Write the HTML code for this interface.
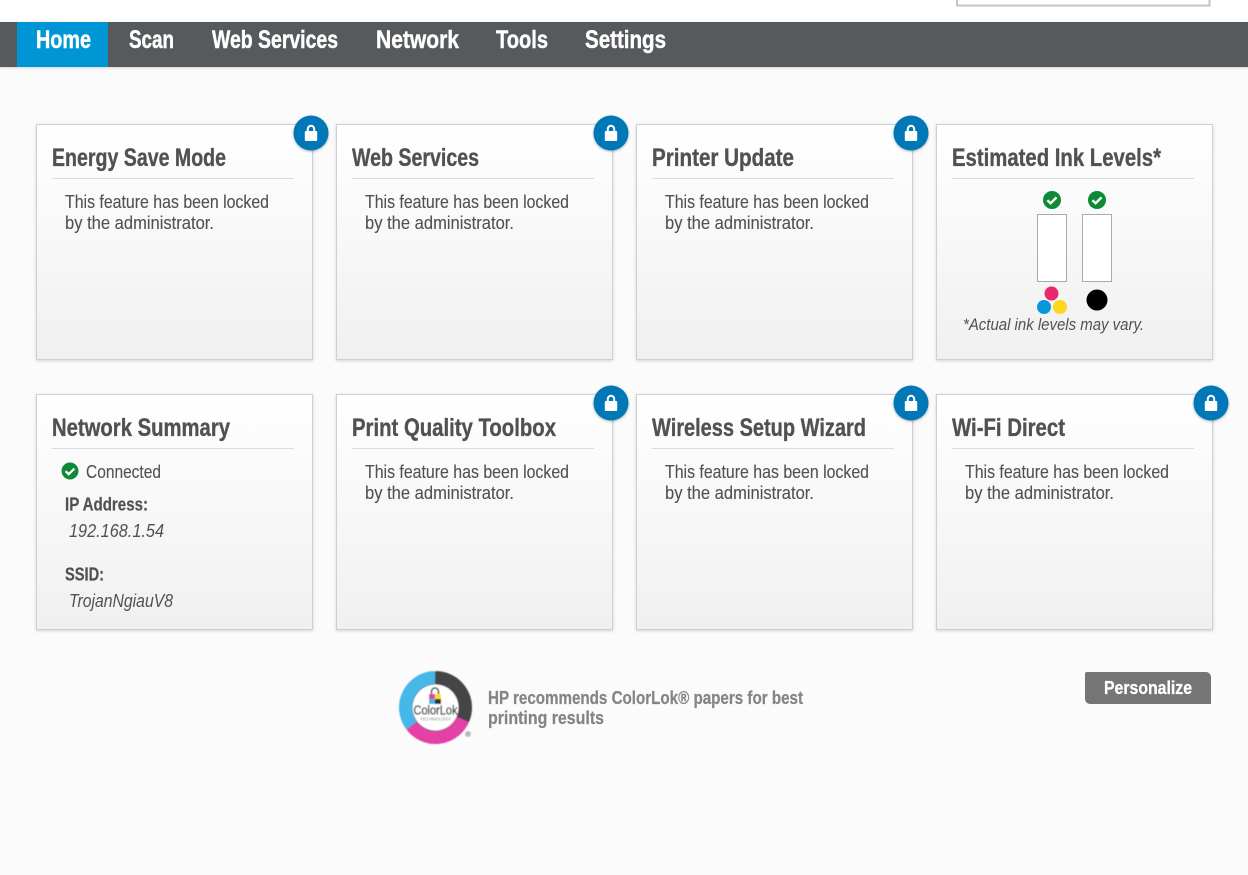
<!DOCTYPE html>
<html lang="en">
<head>
<meta charset="utf-8">
<title>Home</title>
<style>
html,body{margin:0;padding:0;background:#fbfbfb;width:1248px;height:875px;overflow:hidden}
svg{display:block;position:absolute;left:0;top:0}
text{font-family:"Liberation Sans",sans-serif}
.nav{font-size:25px;font-weight:700;fill:#fff;stroke:#fff;stroke-width:.45px}
.t{font-size:25px;font-weight:700;fill:#505252;stroke:#505252;stroke-width:.35px}
.b{font-size:18px;fill:#505252;stroke:#505252;stroke-width:.12px}
.l{font-size:18px;font-weight:700;fill:#505252;stroke:#505252;stroke-width:.2px}
.i{font-size:18px;font-style:italic;fill:#505252}
.g{font-size:18px;font-weight:700;fill:#858585;stroke:#858585;stroke-width:.25px}
</style>
</head>
<body>
<svg width="1248" height="875" viewBox="0 0 1248 875" xmlns="http://www.w3.org/2000/svg">
<defs>
<linearGradient id="cg" x1="0" y1="0" x2="0" y2="1"><stop offset="0" stop-color="#ffffff"/><stop offset="1" stop-color="#f0f0f0"/></linearGradient>
<filter id="sh" x="-5%" y="-5%" width="110%" height="110%"><feDropShadow dx="0" dy="1" stdDeviation="1.5" flood-color="#000" flood-opacity=".16"/></filter>
<filter id="ls" x="-30%" y="-30%" width="160%" height="160%"><feDropShadow dx="0" dy="1" stdDeviation="1.2" flood-color="#000" flood-opacity=".3"/></filter>
<filter id="blur"><feGaussianBlur stdDeviation=".5"/></filter>
<g id="card"><rect x=".5" y=".5" width="276" height="235" fill="url(#cg)" stroke="#cfcfcf" filter="url(#sh)"/><rect x="16" y="54" width="242" height="1" fill="#dcdcdc"/></g>
<g id="lock"><circle r="17.500" fill="#0078b8" filter="url(#ls)"/><path d="M-3.200-2V-4A3.200 3.200 0 0 1 3.200-4V-2" fill="none" stroke="#fff" stroke-width="2"/><rect x="-6.200" y="-2" width="12.400" height="10" rx="1" fill="#fff"/></g>
<g id="chk"><circle r="9" fill="#0e8a36"/><path d="M-4.600 .2L-1.400 3.200L4.600-2.600" fill="none" stroke="#fff" stroke-width="2.400"/></g>
</defs>

<rect width="1248" height="22" fill="#fff"/>
<path d="M957-2V5.500H1209.500V-2" fill="#fff" stroke="#c6c6c6" stroke-width="2"/>

<rect y="22" width="1248" height="45" fill="#575a5b" filter="url(#sh)"/>
<rect x="17" y="22" width="91" height="45" fill="#0096d6"/>
<text class="nav" x="36" y="48" textLength="55" lengthAdjust="spacingAndGlyphs">Home</text>
<text class="nav" x="129" y="48" textLength="45" lengthAdjust="spacingAndGlyphs">Scan</text>
<text class="nav" x="212" y="48" textLength="126" lengthAdjust="spacingAndGlyphs">Web Services</text>
<text class="nav" x="376" y="48" textLength="83" lengthAdjust="spacingAndGlyphs">Network</text>
<text class="nav" x="496" y="48" textLength="52" lengthAdjust="spacingAndGlyphs">Tools</text>
<text class="nav" x="585" y="48" textLength="81" lengthAdjust="spacingAndGlyphs">Settings</text>

<use href="#card" x="36" y="124"/>
<use href="#card" x="336" y="124"/>
<use href="#card" x="636" y="124"/>
<use href="#card" x="936" y="124"/>
<use href="#card" x="36" y="394"/>
<use href="#card" x="336" y="394"/>
<use href="#card" x="636" y="394"/>
<use href="#card" x="936" y="394"/>

<use href="#lock" x="311" y="133"/>
<use href="#lock" x="611" y="133"/>
<use href="#lock" x="911" y="133"/>
<use href="#lock" x="611" y="403"/>
<use href="#lock" x="911" y="403"/>
<use href="#lock" x="1211" y="403"/>

<text class="t" x="52" y="166" textLength="174" lengthAdjust="spacingAndGlyphs">Energy Save Mode</text>
<text class="t" x="352" y="166" textLength="127" lengthAdjust="spacingAndGlyphs">Web Services</text>
<text class="t" x="652" y="166" textLength="142" lengthAdjust="spacingAndGlyphs">Printer Update</text>
<text class="t" x="952" y="166" textLength="209" lengthAdjust="spacingAndGlyphs">Estimated Ink Levels*</text>
<text class="t" x="52" y="436" textLength="178" lengthAdjust="spacingAndGlyphs">Network Summary</text>
<text class="t" x="352" y="436" textLength="204" lengthAdjust="spacingAndGlyphs">Print Quality Toolbox</text>
<text class="t" x="652" y="436" textLength="214" lengthAdjust="spacingAndGlyphs">Wireless Setup Wizard</text>
<text class="t" x="952" y="436" textLength="113" lengthAdjust="spacingAndGlyphs">Wi-Fi Direct</text>

<text class="b" x="65" y="208" textLength="204" lengthAdjust="spacingAndGlyphs">This feature has been locked</text>
<text class="b" x="65" y="229" textLength="149" lengthAdjust="spacingAndGlyphs">by the administrator.</text>
<text class="b" x="365" y="208" textLength="204" lengthAdjust="spacingAndGlyphs">This feature has been locked</text>
<text class="b" x="365" y="229" textLength="149" lengthAdjust="spacingAndGlyphs">by the administrator.</text>
<text class="b" x="665" y="208" textLength="204" lengthAdjust="spacingAndGlyphs">This feature has been locked</text>
<text class="b" x="665" y="229" textLength="149" lengthAdjust="spacingAndGlyphs">by the administrator.</text>
<text class="b" x="365" y="478" textLength="204" lengthAdjust="spacingAndGlyphs">This feature has been locked</text>
<text class="b" x="365" y="499" textLength="149" lengthAdjust="spacingAndGlyphs">by the administrator.</text>
<text class="b" x="665" y="478" textLength="204" lengthAdjust="spacingAndGlyphs">This feature has been locked</text>
<text class="b" x="665" y="499" textLength="149" lengthAdjust="spacingAndGlyphs">by the administrator.</text>
<text class="b" x="965" y="478" textLength="204" lengthAdjust="spacingAndGlyphs">This feature has been locked</text>
<text class="b" x="965" y="499" textLength="149" lengthAdjust="spacingAndGlyphs">by the administrator.</text>

<use href="#chk" x="1052" y="200"/>
<use href="#chk" x="1097" y="200"/>
<rect x="1037.500" y="214.500" width="29" height="67" fill="#fff" stroke="#a9a9a9"/>
<rect x="1082.500" y="214.500" width="29" height="67" fill="#fff" stroke="#a9a9a9"/>
<circle cx="1051.500" cy="293.500" r="7" fill="#e9296d"/>
<circle cx="1044" cy="307" r="7" fill="#0a96d9"/>
<circle cx="1060" cy="307" r="7" fill="#fcd71e"/>
<circle cx="1097" cy="300" r="10.500" fill="#000"/>
<text class="i" x="963" y="330" textLength="181" lengthAdjust="spacingAndGlyphs" style="font-size:16.500px">*Actual ink levels may vary.</text>

<circle cx="70" cy="471" r="8.500" fill="#0e8a36"/>
<path d="M65.600 471.200L68.700 474.200L74.400 468.600" fill="none" stroke="#fff" stroke-width="2.200"/>
<text class="b" x="86" y="478" textLength="75" lengthAdjust="spacingAndGlyphs">Connected</text>
<text class="l" x="65" y="510.500" textLength="83" lengthAdjust="spacingAndGlyphs">IP Address:</text>
<text class="i" x="69" y="537" textLength="95" lengthAdjust="spacingAndGlyphs">192.168.1.54</text>
<text class="l" x="65" y="580.500" textLength="39" lengthAdjust="spacingAndGlyphs">SSID:</text>
<text class="i" x="69" y="607" textLength="104" lengthAdjust="spacingAndGlyphs">TrojanNgiauV8</text>

<g filter="url(#blur)">
<circle cx="435.500" cy="707.500" r="35.500" fill="#58595b"/>
<path d="M435.500 677.500A30 30 0 0 1 463 719.500" fill="none" stroke="#444547" stroke-width="13"/>
<path d="M463 719.500A30 30 0 0 1 411.500 725.500" fill="none" stroke="#e43fa6" stroke-width="13"/>
<path d="M411.500 725.500A30 30 0 0 1 435 677.500" fill="none" stroke="#45b7e8" stroke-width="13"/>
<circle cx="435.500" cy="707.500" r="23" fill="#fff"/>
<path d="M431.500 694V691.500A3.500 3.500 0 0 1 438.500 691.500V694" fill="none" stroke="#444" stroke-width="1.500"/>
<rect x="429" y="694" width="6" height="5" fill="#e43fa6"/>
<rect x="435" y="694" width="6" height="5" fill="#f7e324"/>
<rect x="429" y="699" width="6" height="5" fill="#3fb6e6"/>
<rect x="435" y="699" width="6" height="5" fill="#333"/>
<text x="413.500" y="714.500" textLength="44" lengthAdjust="spacingAndGlyphs" style="font-size:13px;fill:#333;stroke:#333;stroke-width:.3px">ColorLok</text>
<text x="420" y="720.500" textLength="31" lengthAdjust="spacingAndGlyphs" style="font-size:4.500px;fill:#777">TECHNOLOGY</text>
<circle cx="468" cy="734" r="3" fill="#bbb"/>
</g>

<text class="g" x="488" y="704" textLength="315" lengthAdjust="spacingAndGlyphs">HP recommends ColorLok® papers for best</text>
<text class="g" x="488" y="724" textLength="116" lengthAdjust="spacingAndGlyphs">printing results</text>

<path d="M1085 674A2 2 0 0 1 1087 672H1206A5 5 0 0 1 1211 677V704H1090A5 5 0 0 1 1085 699Z" fill="#757575"/>
<text x="1104" y="694" textLength="88" lengthAdjust="spacingAndGlyphs" style="font-size:18px;font-weight:700;fill:#fff;stroke:#fff;stroke-width:.3px">Personalize</text>
</svg>
</body>
</html>
